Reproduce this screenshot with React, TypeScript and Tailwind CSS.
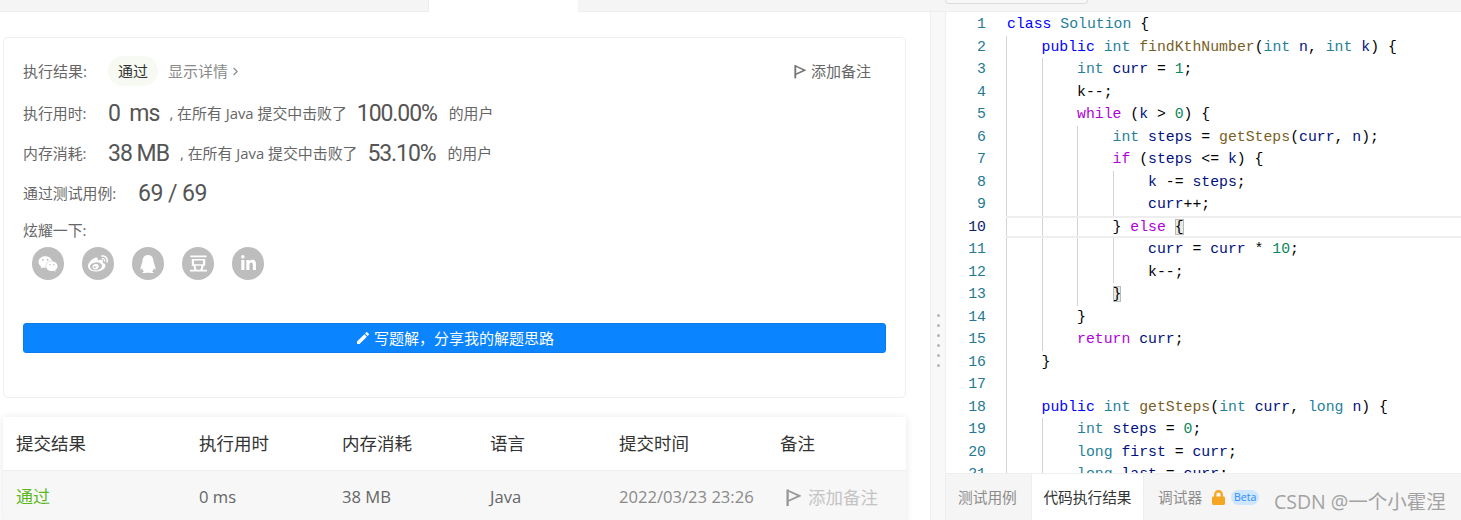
import { FaWeixin, FaWeibo, FaQq, FaLinkedinIn, FaLock } from "react-icons/fa";
import { SiDouban } from "react-icons/si";
import { MdEdit } from "react-icons/md";
import { ChevronRight } from "lucide-react";

const KW = "text-[#0000ff]";
const TY = "text-[#267f99]";
const CT = "text-[#af00db]";
const FN = "text-[#795e26]";
const VR = "text-[#001080]";
const NM = "text-[#098658]";
const PL = "text-black";

type Token = [string, string] | [string, string, "match"];

// guides = how many indent guides the line has, the text starts right after them
const CODE: Array<{ guides: number; tokens: Token[] }> = [
  { guides: 0, tokens: [["class", KW], [" ", PL], ["Solution", TY], [" {", PL]] },
  { guides: 1, tokens: [["public", KW], [" ", PL], ["int", TY], [" ", PL], ["findKthNumber", FN], ["(", PL], ["int", TY], [" ", PL], ["n", VR], [", ", PL], ["int", TY], [" ", PL], ["k", VR], [") {", PL]] },
  { guides: 2, tokens: [["int", TY], [" ", PL], ["curr", VR], [" = ", PL], ["1", NM], [";", PL]] },
  { guides: 2, tokens: [["k--;", PL]] },
  { guides: 2, tokens: [["while", CT], [" (", PL], ["k", VR], [" > ", PL], ["0", NM], [") {", PL]] },
  { guides: 3, tokens: [["int", TY], [" ", PL], ["steps", VR], [" = ", PL], ["getSteps", FN], ["(", PL], ["curr", VR], [", ", PL], ["n", VR], [");", PL]] },
  { guides: 3, tokens: [["if", CT], [" (", PL], ["steps", VR], [" <= ", PL], ["k", VR], [") {", PL]] },
  { guides: 4, tokens: [["k", VR], [" -= ", PL], ["steps", VR], [";", PL]] },
  { guides: 4, tokens: [["curr", VR], ["++;", PL]] },
  { guides: 3, tokens: [["} ", PL], ["else", CT], [" ", PL], ["{", PL, "match"]] },
  { guides: 4, tokens: [["curr", VR], [" = ", PL], ["curr", VR], [" * ", PL], ["10", NM], [";", PL]] },
  { guides: 4, tokens: [["k--;", PL]] },
  { guides: 3, tokens: [["}", PL, "match"]] },
  { guides: 2, tokens: [["}", PL]] },
  { guides: 2, tokens: [["return", CT], [" ", PL], ["curr", VR], [";", PL]] },
  { guides: 1, tokens: [["}", PL]] },
  { guides: 1, tokens: [] },
  { guides: 1, tokens: [["public", KW], [" ", PL], ["int", TY], [" ", PL], ["getSteps", FN], ["(", PL], ["int", TY], [" ", PL], ["curr", VR], [", ", PL], ["long", TY], [" ", PL], ["n", VR], [") {", PL]] },
  { guides: 2, tokens: [["int", TY], [" ", PL], ["steps", VR], [" = ", PL], ["0", NM], [";", PL]] },
  { guides: 2, tokens: [["long", TY], [" ", PL], ["first", VR], [" = ", PL], ["curr", VR], [";", PL]] },
  { guides: 2, tokens: [["long", TY], [" ", PL], ["last", VR], [" = ", PL], ["curr", VR], [";", PL]] },
];

const SHARE_ICONS = [
  <FaWeixin className="w-[20px] h-[20px]" />,
  <FaWeibo className="w-[20px] h-[20px]" />,
  <FaQq className="w-[18px] h-[18px]" />,
  <SiDouban className="w-[17px] h-[17px]" />,
  <FaLinkedinIn className="w-[17px] h-[17px]" />,
];

function FlagIcon({ className }: { className: string }) {
  return (
    <svg viewBox="0 0 14 16" fill="none" stroke="currentColor" strokeWidth="1.7" className={className}>
      <path d="M1.5 0.5V16" strokeWidth="2.2" />
      <path d="M1.5 1.5L12.5 6.5L1.5 11.5" />
    </svg>
  );
}

function StatRow({ label, big, mid, percent, tail, gap }: { label: string; big: string; mid: string; percent: string; tail: string; gap: string }) {
  return (
    <div className="flex items-center h-[40px] text-[14.9px] text-[#666]">
      <span className="w-[85px] shrink-0">{label}</span>
      <span className="pt-[2px] font-['Roboto',sans-serif] text-[23px] text-[#555] tracking-[-1px] whitespace-pre">{big}</span>
      <span className={`${gap} whitespace-pre`}>{mid}</span>
      <span className="pt-[2px] ml-[10px] font-['Roboto',sans-serif] text-[23px] text-[#555] tracking-[-1.1px]">{percent}</span>
      <span className="ml-[12px]">{tail}</span>
    </div>
  );
}

function ResultCard() {
  return (
    <div className="mt-[25px] ml-[3px] w-[903px] h-[361px] border border-[#eee] rounded-[5px] bg-white pl-[19px] pr-[19px] pt-[13px]">
      <div className="flex items-center h-[40px] mb-[2px] text-[15px] text-[#666]">
        <span className="w-[85px] shrink-0">执行结果:</span>
        <span className="flex items-center justify-center w-[50px] h-[30px] rounded-full bg-[#f6faf3] text-[#333]">通过</span>
        <span className="ml-[10px] text-[#8a8a8a]">显示详情</span>
        <ChevronRight className="ml-[1px] w-[13px] h-[13px] text-[#8a8a8a]" />
        <span className="ml-auto mr-[15px] flex items-center gap-[5px]">
          <FlagIcon className="w-[12px] h-[15px] text-[#777]" />
          添加备注
        </span>
      </div>
      <StatRow label="执行用时:" big="0  ms" mid=", 在所有 Java 提交中击败了" percent="100.00%" tail="的用户" gap="ml-[10px]" />
      <StatRow label="内存消耗:" big="38 MB" mid=", 在所有 Java 提交中击败了" percent="53.10%" tail="的用户" gap="ml-[11px]" />
      <div className="flex items-center h-[40px] text-[14.9px] text-[#666]">
        <span className="w-[115px] shrink-0">通过测试用例:</span>
        <span className="pt-[2px] font-['Roboto',sans-serif] text-[23px] text-[#555] tracking-[-0.55px] whitespace-pre">69 / 69</span>
      </div>
      <div className="mt-[7px] text-[14.9px] leading-[20px] text-[#666]">炫耀一下:</div>
      <div className="flex gap-[18px] mt-[7px] ml-[9px]">
        {SHARE_ICONS.map((icon, i) => (
          <div key={i} className="flex items-center justify-center w-[32px] h-[33px] rounded-full bg-[#bdbdbd] text-white">
            {icon}
          </div>
        ))}
      </div>
      <button className="flex items-center justify-center gap-[3px] w-[863px] h-[30px] mt-[43px] rounded-[3px] bg-[#0a84ff] border border-[#0a7be8] text-white text-[15px]">
        <MdEdit className="w-[16px] h-[16px]" />
        {"写题解\uFF0C分享我的解题思路"}
      </button>
    </div>
  );
}

function SubmissionTable() {
  return (
    <div className="mt-[19px] ml-[3px] w-[903px] bg-white shadow-[0_1px_8px_rgba(0,0,0,0.1)]">
      <div className="flex items-center h-[54px] border-b border-[#eee] pl-[13px] text-[17.5px] text-[#333]">
        <span className="w-[183px]">提交结果</span>
        <span className="w-[143px]">执行用时</span>
        <span className="w-[148px]">内存消耗</span>
        <span className="w-[129px]">语言</span>
        <span className="w-[161px]">提交时间</span>
        <span>备注</span>
      </div>
      <div className="flex items-center h-[52px] bg-[#f7f7f7] pl-[13px] text-[16.6px] text-[#666]">
        <span className="w-[183px] text-[#5cb81c] text-[17px]">通过</span>
        <span className="w-[143px]">0 ms</span>
        <span className="w-[148px]">38 MB</span>
        <span className="w-[129px]">Java</span>
        <span className="w-[167px] text-[#8a8a8a]">2022/03/23 23:26</span>
        <span className="flex items-center gap-[7px] text-[#c4c4c4] text-[17.5px]">
          <FlagIcon className="w-[15px] h-[19px] text-[#999]" />
          添加备注
        </span>
      </div>
    </div>
  );
}

function CodeLine({ n, guides, tokens }: { n: number; guides: number; tokens: Token[] }) {
  const active = n === 10;
  return (
    <div className="flex h-[22.5px] leading-[22.5px] whitespace-pre">
      <span className={`w-[40px] shrink-0 text-right ${active ? "text-[#0b216f]" : "text-[#237893]"}`}>{n}</span>
      <div className={`flex flex-1 ml-[20px] ${active ? "border-y-2 border-[#eeeeee] leading-[18.5px]" : ""}`}>
        {Array.from({ length: guides }).map((_, i) => (
          <span key={i} className="w-[35.5px] shrink-0 border-l border-[#d3d3d3]" />
        ))}
        <span className={guides === 0 ? "pl-[1px]" : ""}>
          {tokens.map((t, i) => (
            <span key={i} className={t[2] ? `${t[1]} bg-[#e8ebe4] outline outline-1 outline-[#b9b9b9] -outline-offset-1` : t[1]}>
              {t[0]}
            </span>
          ))}
        </span>
      </div>
    </div>
  );
}

function BottomTabs() {
  return (
    <div className="relative flex items-stretch h-[47px] shrink-0 bg-[#f5f5f5] border-t border-[#eee] text-[14.7px] text-[#8c8c8c]">
      <span className="flex items-center w-[85px] pl-[12px]">测试用例</span>
      <span className="flex items-center justify-center w-[113px] bg-white text-[#333] border-x border-[#eee]">代码执行结果</span>
      <span className="flex items-center ml-[14px]">调试器</span>
      <FaLock className="self-center ml-[10px] w-[13px] h-[15px] text-[#f5a623]" />
      <span className="self-center ml-[6px] px-[3px] h-[15px] leading-[15px] rounded-full bg-[#cfe6ff] text-[#2b8cff] text-[10.5px]">Beta</span>
      <span className="absolute left-[328px] top-[15px] text-[19.5px] leading-[26px] text-[#9a9a9a] opacity-90 whitespace-pre">CSDN @一个小霍涅</span>
    </div>
  );
}

export default function App() {
  return (
    <div className="w-[1461px] h-[520px] overflow-hidden bg-white font-['Open_Sans','Noto_Sans_CJK_SC',sans-serif] flex flex-col">
      <div className="flex h-[12px] shrink-0 bg-[#f5f5f5] border-b border-[#eee]">
        <div className="ml-[428px] w-[150px] h-[12px] bg-white border-l border-[#eee]" />
        <div className="ml-[367px] w-[143px] h-[4px] border-x border-b border-[#ddd] rounded-b-[4px] bg-[#f7f7f7]" />
      </div>
      <div className="flex flex-1 min-h-0">
        <div className="w-[931px] shrink-0 overflow-hidden border-r border-[#eee]">
          <ResultCard />
          <SubmissionTable />
        </div>
        <div className="flex flex-col items-center justify-center gap-[7px] w-[14px] shrink-0 bg-[#f8f8f8] pt-[148px]">
          {[0, 1, 2, 3, 4, 5].map((i) => (
            <span key={i} className="w-[3px] h-[3px] rounded-full bg-[#b5b5b5]" />
          ))}
        </div>
        <div className="flex flex-col flex-1 min-w-0 border-l border-[#eee]">
          <div className="flex-1 min-h-0 overflow-hidden pt-[1px] font-['Liberation_Mono',monospace] text-[14.8px]">
            {CODE.map((line, i) => (
              <CodeLine key={i} n={i + 1} guides={line.guides} tokens={line.tokens} />
            ))}
          </div>
          <BottomTabs />
        </div>
      </div>
    </div>
  );
}
